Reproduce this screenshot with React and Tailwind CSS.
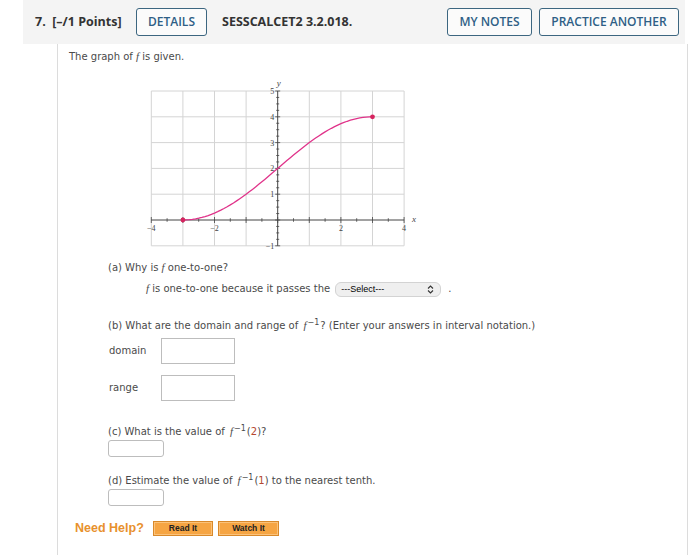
import React from "react";

const OX = 146.7;
const OY = 150;
const UX = 31.6;
const UY = 25.8;
const sx = (x) => OX + x * UX;
const sy = (y) => OY - y * UY;

function Graph() {
  const verts = [-4, -3, -2, -1, 1, 2, 3, 4];
  const hors = [-1, 1, 2, 3, 4, 5];
  const pts = [];
  for (let i = 0; i <= 60; i++) {
    const x = -3 + (6 * i) / 60;
    const y = 2 + 2 * Math.sin((Math.PI * x) / 6);
    pts.push(`${sx(x).toFixed(2)},${sy(y).toFixed(2)}`);
  }
  const xt = [];
  for (let v = -4; v <= 4.001; v += 0.5) xt.push(v);
  const yt = [];
  for (let v = -1; v <= 5.001; v += 0.25) yt.push(v);
  return (
    <svg width="290" height="180" viewBox="0 0 290 180" className="block">
      {verts.map((v) => (
        <line key={"v" + v} x1={sx(v)} x2={sx(v)} y1={sy(5)} y2={sy(-1)} stroke="#d4d4d4" strokeWidth="1" />
      ))}
      {hors.map((v) => (
        <line key={"h" + v} x1={sx(-4)} x2={sx(4)} y1={sy(v)} y2={sy(v)} stroke="#d4d4d4" strokeWidth="1" />
      ))}
      <line x1={sx(-4)} x2={sx(4)} y1={sy(0)} y2={sy(0)} stroke="#444" strokeWidth="1" />
      <line x1={sx(0)} x2={sx(0)} y1={sy(5)} y2={sy(-1)} stroke="#444" strokeWidth="1" />
      {xt.map((v) => {
        const major = Math.abs(v - Math.round(v)) < 0.01;
        const l = major ? 3 : 1.8;
        return <line key={"xt" + v} x1={sx(v)} x2={sx(v)} y1={sy(0) - l} y2={sy(0) + l} stroke="#444" strokeWidth="0.8" />;
      })}
      {yt.map((v) => {
        const major = Math.abs(v - Math.round(v)) < 0.01;
        const l = major ? 2.5 : 1.5;
        return <line key={"yt" + v} x1={sx(0) - l} x2={sx(0) + l} y1={sy(v)} y2={sy(v)} stroke="#444" strokeWidth="0.8" />;
      })}
      {[-4, -2, 2, 4].map((v) => (
        <text key={"xl" + v} x={sx(v)} y={sy(0) + 11} fontSize="8" fill="#444" textAnchor="middle" fontFamily="'Liberation Serif', serif">
          {v < 0 ? "\u2212" + Math.abs(v) : v}
        </text>
      ))}
      {[-1, 1, 2, 3, 4, 5].map((v) => (
        <text key={"yl" + v} x={sx(0) - 3.5} y={sy(v) + 3} fontSize="8" fill="#444" textAnchor="end" fontFamily="'Liberation Serif', serif">
          {v < 0 ? "\u2212" + Math.abs(v) : v}
        </text>
      ))}
      <text x={sx(4) + 8} y={sy(0) + 2} fontSize="9" fill="#444" fontStyle="italic" fontFamily="'Liberation Serif', serif">x</text>
      <text x={sx(0) - 1} y={sy(5) - 5} fontSize="9" fill="#444" fontStyle="italic" fontFamily="'Liberation Serif', serif">y</text>
      <polyline points={pts.join(" ")} fill="none" stroke="#e0338a" strokeWidth="1.3" />
      <circle cx={sx(-3)} cy={sy(0)} r="2.4" fill="#d6245f" />
      <circle cx={sx(3)} cy={sy(4)} r="2.4" fill="#d6245f" />
    </svg>
  );
}

const F = () => <span className="italic font-['Liberation_Serif',serif] text-[11px] leading-none">f</span>;
const Finv = () => (
  <span className="font-['Liberation_Serif',serif] leading-none ml-[2px] mr-[1px]">
    <span className="italic text-[11px]">f</span>
    <sup className="text-[8px] font-['DejaVu_Sans',sans-serif] ml-[1px]">{"\u2212"}1</sup>
  </span>
);

function HeaderBtn({ children, w }) {
  return (
    <div className={`${w} h-[28px] flex items-center justify-center rounded-[3px] border-[1.5px] border-[#3c6680] bg-[#fbfbfb] text-[12px] font-semibold text-[#2f5f86] font-['Open_Sans',sans-serif]`}>
      {children}
    </div>
  );
}

export default function App() {
  return (
    <div className="w-[700px] h-[555px] bg-white flex flex-col overflow-hidden font-['DejaVu_Sans',sans-serif]">
      <div className="ml-[23px] w-[662px] h-[44px] shrink-0 bg-[#f4f4f4] flex items-center pl-[12px] pr-[6px]">
        <span className="text-[12.5px] font-bold text-[#333] font-['Open_Sans',sans-serif] w-[101px]">7.&nbsp;&nbsp;[–/1 Points]</span>
        <HeaderBtn w="w-[71px]">DETAILS</HeaderBtn>
        <span className="ml-[15px] text-[12.5px] font-bold text-[#333] font-['Open_Sans',sans-serif]">SESSCALCET2 3.2.018.</span>
        <div className="ml-auto flex gap-[7px]">
          <HeaderBtn w="w-[85px]">MY NOTES</HeaderBtn>
          <HeaderBtn w="w-[140px]">PRACTICE ANOTHER</HeaderBtn>
        </div>
      </div>
      <div className="ml-[57px] w-[631px] flex-1 border-l border-r border-[#dcdcdc] flex flex-col pl-[11px] pt-[6px] text-[10px] leading-[14px] text-[#4a4a4a]">
        <div className="h-[14px]">The graph of <F /> is given.</div>
        <div className="ml-[62px] mt-[6px] h-[180px]">
          <Graph />
        </div>
        <div className="ml-[39px] mt-[11px] h-[14px]">(a) Why is <F /> one-to-one?</div>
        <div className="ml-[77px] mt-[6px] h-[16px] flex items-center">
          <span className="h-[14px]"><F /> is one-to-one because it passes the</span>
          <div className="ml-[5px] w-[106px] h-[15px] rounded-[6px] bg-[#efefef] border border-[#d3d3d3] flex items-center pl-[5px] pr-[6px] text-[9px] text-black font-['Liberation_Sans',sans-serif]">
            <span>---Select---</span>
            <svg className="ml-auto" width="7" height="9" viewBox="0 0 7 9">
              <path d="M1 3.5 L3.5 1 L6 3.5 M1 5.5 L3.5 8 L6 5.5" fill="none" stroke="#333" strokeWidth="1.1" />
            </svg>
          </div>
          <span className="ml-[7px] h-[14px]">.</span>
        </div>
        <div className="ml-[39px] mt-[22px] h-[14px]">
          (b) What are the domain and range of <Finv />? (Enter your answers in interval notation.)
        </div>
        <div className="ml-[40px] mt-[5px] h-[26px] flex items-center">
          <span className="w-[52px]">domain</span>
          <div className="w-[74px] h-[26px] border border-[#bdbdbd] bg-white"></div>
        </div>
        <div className="ml-[40px] mt-[11px] h-[26px] flex items-center">
          <span className="w-[52px]">range</span>
          <div className="w-[74px] h-[26px] border border-[#bdbdbd] bg-white"></div>
        </div>
        <div className="ml-[39px] mt-[24px] h-[14px]">
          (c) What is the value of <Finv />(<span className="text-[#b5472f]">2</span>)?
        </div>
        <div className="ml-[39px] mt-[1px] w-[56px] h-[17px] shrink-0 rounded-[3px] border border-[#bdbdbd] bg-white"></div>
        <div className="ml-[39px] mt-[17px] h-[14px]">
          (d) Estimate the value of <Finv />(<span className="text-[#b5472f]">1</span>) to the nearest tenth.
        </div>
        <div className="ml-[39px] mt-[1px] w-[56px] h-[17px] shrink-0 rounded-[3px] border border-[#bdbdbd] bg-white"></div>
        <div className="ml-[6px] mt-[14px] h-[16px] flex items-center">
          <span className="text-[12.5px] font-bold text-[#e8912d] font-['Liberation_Sans',sans-serif] w-[78px]">Need Help?</span>
          <div className="w-[60px] h-[15px] flex items-center justify-center bg-[#f6a543] border border-[#d9892a] shadow-[inset_0_0_0_1px_#fbc27a] text-[8.5px] font-bold text-[#222] font-['Liberation_Sans',sans-serif]">Read It</div>
          <div className="ml-[5px] w-[61px] h-[15px] flex items-center justify-center bg-[#f6a543] border border-[#d9892a] shadow-[inset_0_0_0_1px_#fbc27a] text-[8.5px] font-bold text-[#222] font-['Liberation_Sans',sans-serif]">Watch It</div>
        </div>
      </div>
    </div>
  );
}
